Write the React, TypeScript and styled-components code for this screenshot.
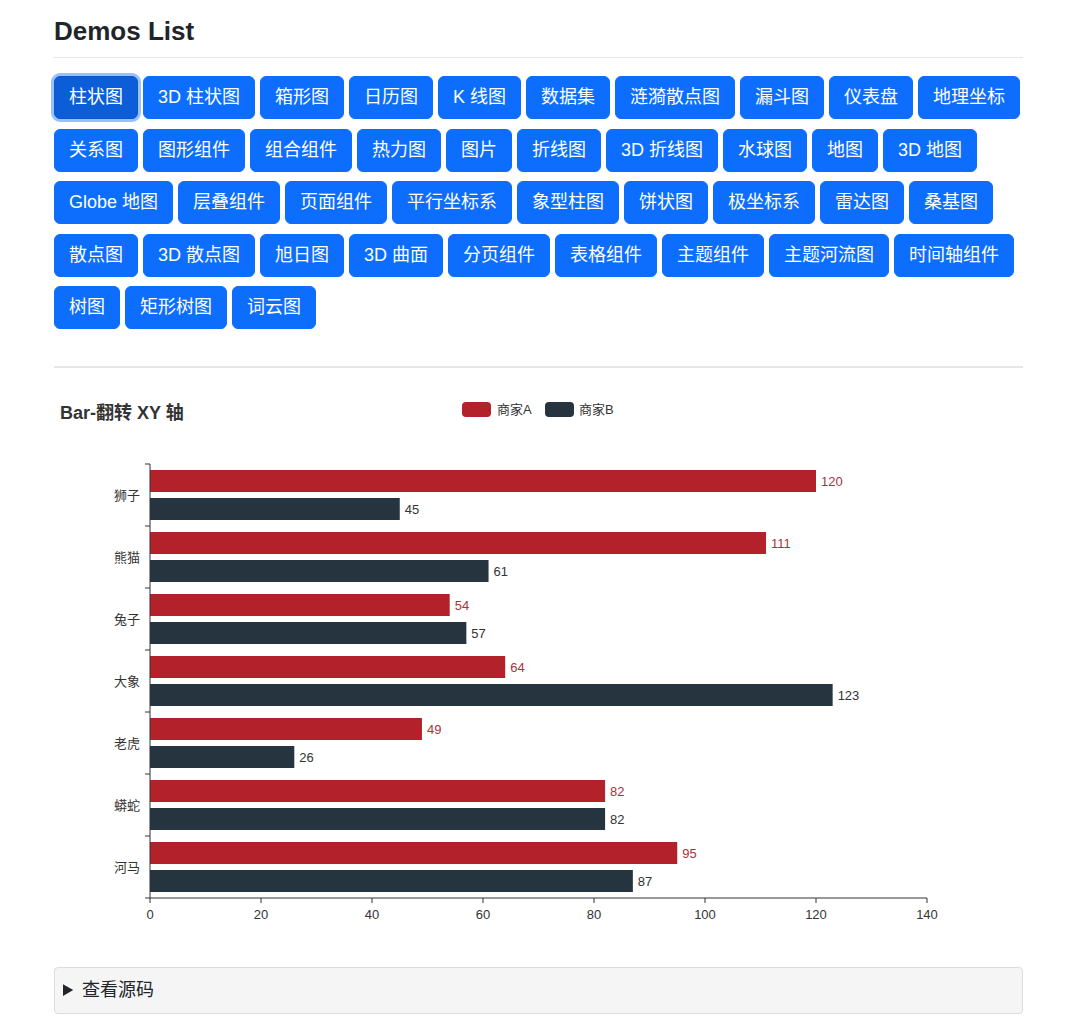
import React from "react";
import styled, { createGlobalStyle } from "styled-components";

const GlobalStyle = createGlobalStyle`
  body {
    margin: 0;
    background: #fff;
    color: #212529;
    font-family: "Liberation Sans", "Noto Sans CJK SC", sans-serif;
  }
`;

const Page = styled.div`
  width: 969px;
  margin: 0 0 0 54px;
  padding-top: 16px;
`;

const Heading = styled.h1`
  margin: 0;
  padding-bottom: 10px;
  font-size: 26px;
  font-weight: 700;
  line-height: 1.2;
  color: #212529;
  border-bottom: 1px solid #e3e5e8;
`;

const ButtonList = styled.div`
  display: flex;
  flex-wrap: wrap;
  gap: 9.5px 5px;
  margin: 18px -15px 0 0;
`;

const DemoButton = styled.button<{ $active?: boolean }>`
  font-family: "Liberation Sans", "Noto Sans CJK SC", sans-serif;
  font-size: 18px;
  line-height: 27px;
  padding: 7px 14px;
  border-radius: 6px;
  color: #fff;
  border: 1px solid ${(p) => (p.$active ? "#0a58ca" : "#0d6efd")};
  background: ${(p) => (p.$active ? "#0b5ed7" : "#0d6efd")};
  box-shadow: ${(p) => (p.$active ? "0 0 0 3px rgba(49, 132, 253, 0.5)" : "none")};
  cursor: pointer;
`;

const Divider = styled.hr`
  margin: 37px 0 0;
  border: 0;
  border-top: 2px solid #e6e6e6;
`;

const ChartSvg = styled.svg`
  display: block;
  font-family: "Liberation Sans", "Noto Sans CJK SC", sans-serif;
`;

const Source = styled.details`
  margin-top: 20px;
  background: #f5f5f5;
  border: 1px solid #dcdcdc;
  border-radius: 4px;
  padding: 9px 8px;
`;

const SourceSummary = styled.summary`
  font-size: 18px;
  line-height: 27px;
  color: #212529;
  cursor: pointer;
`;

const demos = [
  "柱状图", "3D 柱状图", "箱形图", "日历图", "K 线图", "数据集", "涟漪散点图", "漏斗图", "仪表盘", "地理坐标",
  "关系图", "图形组件", "组合组件", "热力图", "图片", "折线图", "3D 折线图", "水球图", "地图", "3D 地图",
  "Globe 地图", "层叠组件", "页面组件", "平行坐标系", "象型柱图", "饼状图", "极坐标系", "雷达图", "桑基图",
  "散点图", "3D 散点图", "旭日图", "3D 曲面", "分页组件", "表格组件", "主题组件", "主题河流图", "时间轴组件",
  "树图", "矩形树图", "词云图",
];

const categories = ["狮子", "熊猫", "兔子", "大象", "老虎", "蟒蛇", "河马"];
const seriesA = [120, 111, 54, 64, 49, 82, 95];
const seriesB = [45, 61, 57, 123, 26, 82, 87];

const RED = "#b3212a";
const DARK = "#25343f";

const left = 96;
const top = 96;
const band = 62;
const bottom = top + band * 7;
const unit = 111 / 20;

const BarChart = () => (
  <ChartSvg width={969} height={579} viewBox="0 0 969 579">
    <text x={6} y={51} fontSize={18} fontWeight={700} fill="#333">
      Bar-翻转 XY 轴
    </text>
    <rect x={408} y={34} width={29} height={15} rx={4} fill={RED} />
    <text x={443} y={46} fontSize={13} fill="#333">商家A</text>
    <rect x={491} y={34} width={29} height={15} rx={4} fill={DARK} />
    <text x={525} y={46} fontSize={13} fill="#333">商家B</text>

    {categories.map((name, i) => {
      const y = top + band * i;
      const a = seriesA[i];
      const b = seriesB[i];
      return (
        <g key={name}>
          <rect x={left} y={y + 6} width={a * unit} height={22} fill={RED} />
          <text x={left + a * unit + 5} y={y + 17} fontSize={13} fill="#a8333a" dominantBaseline="central">
            {a}
          </text>
          <rect x={left} y={y + 34} width={b * unit} height={22} fill={DARK} />
          <text x={left + b * unit + 5} y={y + 45} fontSize={13} fill="#333" dominantBaseline="central">
            {b}
          </text>
          <text x={left - 10} y={y + 31} fontSize={13} fill="#333" textAnchor="end" dominantBaseline="central">
            {name}
          </text>
        </g>
      );
    })}

    <line x1={left} y1={top} x2={left} y2={bottom} stroke="#333" />
    {Array.from({ length: 8 }, (_, i) => (
      <line key={i} x1={left - 5} y1={top + band * i} x2={left} y2={top + band * i} stroke="#333" />
    ))}
    <line x1={left} y1={bottom} x2={left + 140 * unit} y2={bottom} stroke="#333" />
    {Array.from({ length: 8 }, (_, i) => {
      const x = left + i * 20 * unit;
      return (
        <g key={i}>
          <line x1={x} y1={bottom} x2={x} y2={bottom + 5} stroke="#333" />
          <text x={x} y={bottom + 21} fontSize={13} fill="#333" textAnchor="middle">
            {i * 20}
          </text>
        </g>
      );
    })}
  </ChartSvg>
);

const App = () => (
  <>
    <GlobalStyle />
    <Page>
      <Heading>Demos List</Heading>
      <ButtonList>
        {demos.map((d, i) => (
          <DemoButton key={d} $active={i === 0}>
            {d}
          </DemoButton>
        ))}
      </ButtonList>
      <Divider />
      <BarChart />
      <Source>
        <SourceSummary>查看源码</SourceSummary>
      </Source>
    </Page>
  </>
);

export default App;
